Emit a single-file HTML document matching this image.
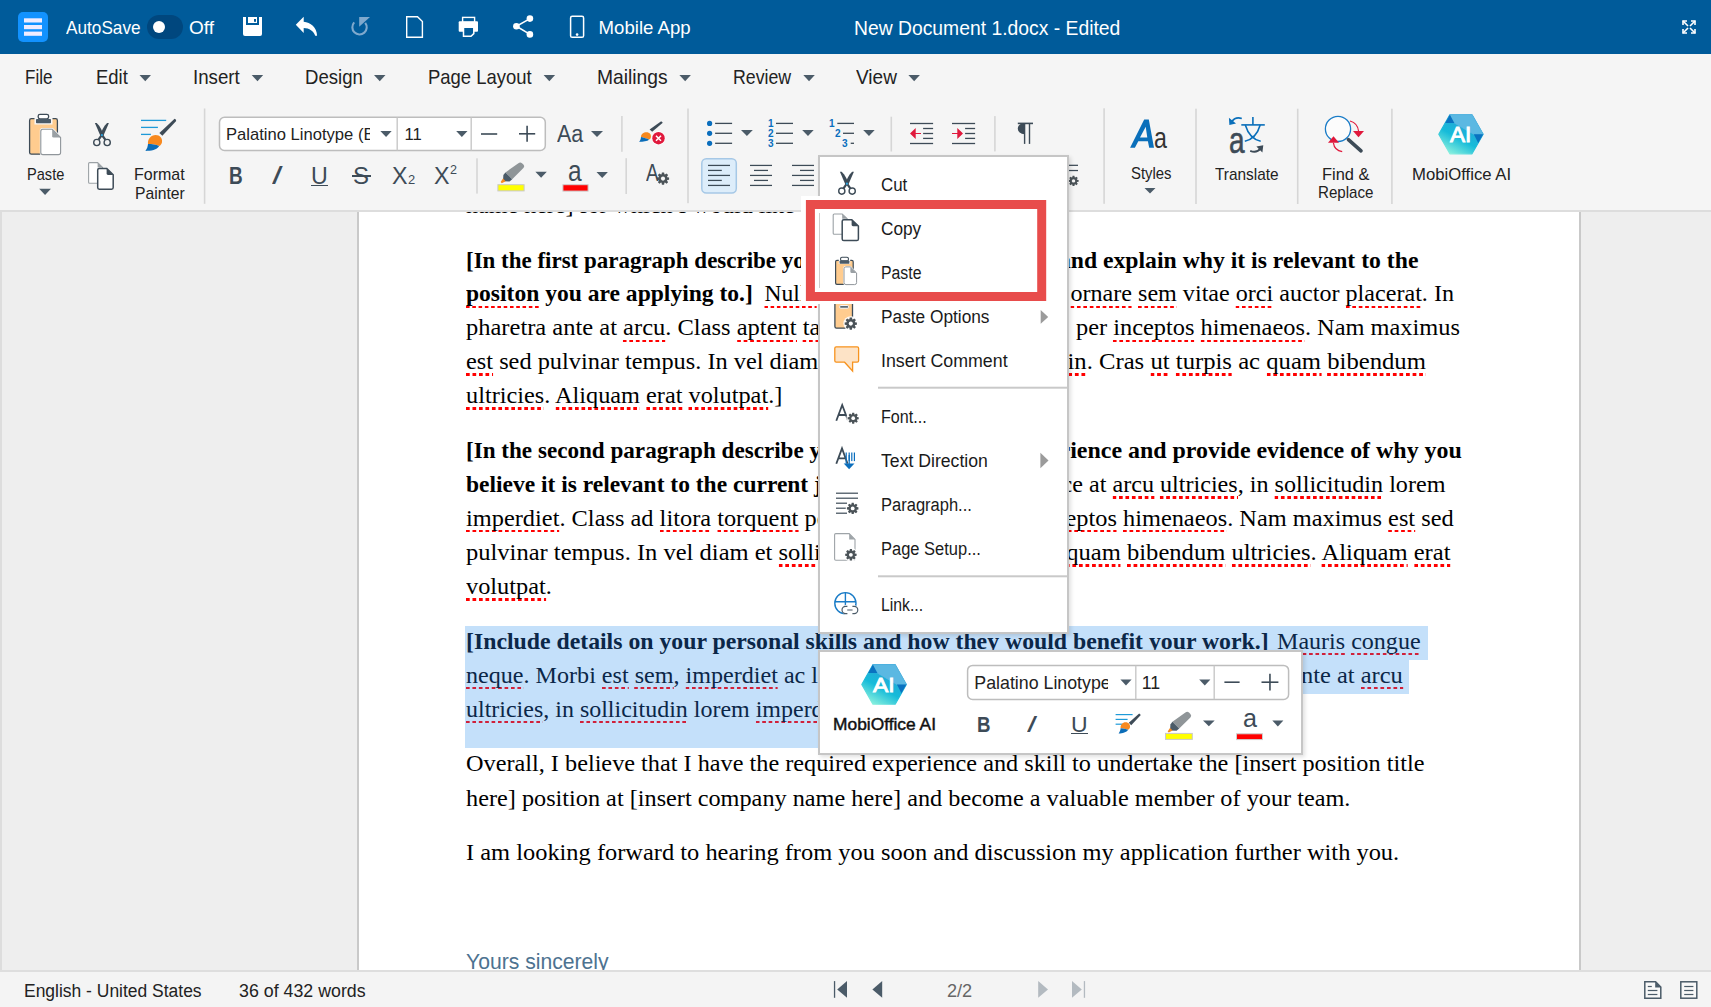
<!DOCTYPE html>
<html><head><meta charset="utf-8"><title>New Document 1.docx - Edited</title>
<style>
html,body{margin:0;padding:0;width:1711px;height:1007px;overflow:hidden;background:#eeeeee}
body{position:relative;font-family:"Liberation Sans",sans-serif}
.t{position:absolute;white-space:pre}
.sp{background-image:linear-gradient(to right,#ff0000 0,#ff0000 62%,transparent 62%);background-size:6px 2.6px;background-repeat:repeat-x;background-position:0 100%;padding-bottom:1.8px}
.sp2{background-image:linear-gradient(to right,#d0213a 0,#d0213a 62%,transparent 62%)}
b{font-weight:700}
</style></head><body>
<div style="position:absolute;left:0px;top:0px;width:1711px;height:1007px;background:#eeeeee"></div>
<div style="position:absolute;left:0px;top:0px;width:1711px;height:54px;background:#005b9a"></div>
<div style="position:absolute;left:0px;top:54px;width:1711px;height:156px;background:#f5f5f5"></div>
<div style="position:absolute;left:357px;top:210px;width:1224px;height:760px;background:#ffffff;border-left:2px solid #c9c9c9;border-right:2px solid #c9c9c9;box-sizing:border-box"></div>
<div style="position:absolute;left:465px;top:625.9px;width:962.6px;height:33.7px;background:#c4e0fa"></div>
<div style="position:absolute;left:465px;top:659.6px;width:943.9px;height:34px;background:#c4e0fa"></div>
<div style="position:absolute;left:465px;top:693.6px;width:836px;height:54.2px;background:#c4e0fa"></div>
<div style="position:absolute;left:0;top:210px;width:1711px;height:760px;overflow:hidden"><div style="position:absolute;left:0;top:-210px;width:1711px;height:1007px">
<div class="t" style="left:466.00px;top:190.90px;font-family:'Liberation Serif', serif;font-size:22.5px;font-weight:400;line-height:30px;color:#000000;transform:scaleX(1.0696);transform-origin:0 0;">name here] for which I would like</div>
<div class="t" style="left:466.00px;top:245.50px;font-family:'Liberation Serif', serif;font-size:22.5px;font-weight:400;line-height:30px;color:#000000;transform:scaleX(1.0206);transform-origin:0 0;"><b>[In the first paragraph describe</b><span style="position:absolute;left:100%;top:0"><b> your current</b></span></div>
<div class="t" style="left:1103.00px;top:245.50px;font-family:'Liberation Serif', serif;font-size:22.5px;font-weight:400;line-height:30px;color:#000000;transform:scaleX(1.0528);transform-origin:0 0;"><span style="position:absolute;right:100%;top:0"><b>and </b></span><b>explain why it is relevant to the</b></div>
<div class="t" style="left:466.00px;top:279.40px;font-family:'Liberation Serif', serif;font-size:22.5px;font-weight:400;line-height:30px;color:#000000;transform:scaleX(1.0467);transform-origin:0 0;"><b><span class="sp">positon</span> you are applying to.]</b><span style="position:absolute;left:100%;top:0">  <span class="sp">Nulla</span></span></div>
<div class="t" style="left:1138.00px;top:279.40px;font-family:'Liberation Serif', serif;font-size:22.5px;font-weight:400;line-height:30px;color:#000000;transform:scaleX(1.0716);transform-origin:0 0;"><span style="position:absolute;right:100%;top:0"><span class="sp">ornare</span> </span><span class="sp">sem</span> vitae <span class="sp">orci</span> auctor <span class="sp">placerat</span>. In</div>
<div class="t" style="left:466.00px;top:313.30px;font-family:'Liberation Serif', serif;font-size:22.5px;font-weight:400;line-height:30px;color:#000000;transform:scaleX(1.0888);transform-origin:0 0;">pharetra ante at <span class="sp">arcu</span>. Class <span class="sp">aptent</span><span style="position:absolute;left:100%;top:0"> <span class="sp">taciti</span></span></div>
<div class="t" style="left:1076.00px;top:313.30px;font-family:'Liberation Serif', serif;font-size:22.5px;font-weight:400;line-height:30px;color:#000000;transform:scaleX(1.0838);transform-origin:0 0;"><span style="position:absolute;right:100%;top:0">nostra, </span>per <span class="sp">inceptos</span> <span class="sp">himenaeos</span>. Nam maximus</div>
<div class="t" style="left:466.00px;top:347.00px;font-family:'Liberation Serif', serif;font-size:22.5px;font-weight:400;line-height:30px;color:#000000;transform:scaleX(1.0820);transform-origin:0 0;"><span class="sp">est</span> sed pulvinar tempus. In vel<span style="position:absolute;left:100%;top:0"> diam et</span></div>
<div class="t" style="left:1098.80px;top:347.00px;font-family:'Liberation Serif', serif;font-size:22.5px;font-weight:400;line-height:30px;color:#000000;transform:scaleX(1.0965);transform-origin:0 0;"><span style="position:absolute;right:100%;top:0"><span class="sp">sollicitudin</span>. </span>Cras <span class="sp">ut</span> <span class="sp">turpis</span> ac <span class="sp">quam</span> <span class="sp">bibendum</span></div>
<div class="t" style="left:466.00px;top:381.00px;font-family:'Liberation Serif', serif;font-size:22.5px;font-weight:400;line-height:30px;color:#000000;transform:scaleX(1.0792);transform-origin:0 0;"><span class="sp">ultricies</span>. <span class="sp">Aliquam</span> <span class="sp">erat</span> <span class="sp">volutpat</span>.]</div>
<div class="t" style="left:466.00px;top:436.10px;font-family:'Liberation Serif', serif;font-size:22.5px;font-weight:400;line-height:30px;color:#000000;transform:scaleX(1.0272);transform-origin:0 0;"><b>[In the second paragraph describe</b><span style="position:absolute;left:100%;top:0"><b> your</b></span></div>
<div class="t" style="left:1127.50px;top:436.10px;font-family:'Liberation Serif', serif;font-size:22.5px;font-weight:400;line-height:30px;color:#000000;transform:scaleX(1.0631);transform-origin:0 0;"><span style="position:absolute;right:100%;top:0"><b>experience </b></span><b>and provide evidence of why you</b></div>
<div class="t" style="left:466.00px;top:469.90px;font-family:'Liberation Serif', serif;font-size:22.5px;font-weight:400;line-height:30px;color:#000000;transform:scaleX(1.0438);transform-origin:0 0;"><b>believe it is relevant to the current</b><span style="position:absolute;left:100%;top:0"><b> job</b></span></div>
<div class="t" style="left:1089.00px;top:469.90px;font-family:'Liberation Serif', serif;font-size:22.5px;font-weight:400;line-height:30px;color:#000000;transform:scaleX(1.0720);transform-origin:0 0;"><span style="position:absolute;right:100%;top:0">Fusce </span>at <span class="sp">arcu</span> <span class="sp">ultricies</span>, in <span class="sp">sollicitudin</span> lorem</div>
<div class="t" style="left:466.00px;top:503.50px;font-family:'Liberation Serif', serif;font-size:22.5px;font-weight:400;line-height:30px;color:#000000;transform:scaleX(1.0833);transform-origin:0 0;"><span class="sp">imperdiet</span>. Class ad <span class="sp">litora</span> <span class="sp">torquent</span><span style="position:absolute;left:100%;top:0"> per</span></div>
<div class="t" style="left:1123.30px;top:503.50px;font-family:'Liberation Serif', serif;font-size:22.5px;font-weight:400;line-height:30px;color:#000000;transform:scaleX(1.0822);transform-origin:0 0;"><span style="position:absolute;right:100%;top:0"><span class="sp">inceptos</span> </span><span class="sp">himenaeos</span>. Nam maximus <span class="sp">est</span> sed</div>
<div class="t" style="left:466.00px;top:537.80px;font-family:'Liberation Serif', serif;font-size:22.5px;font-weight:400;line-height:30px;color:#000000;transform:scaleX(1.0897);transform-origin:0 0;">pulvinar tempus. In vel diam et<span style="position:absolute;left:100%;top:0"> <span class="sp">sollicitudin</span></span></div>
<div class="t" style="left:1126.80px;top:537.80px;font-family:'Liberation Serif', serif;font-size:22.5px;font-weight:400;line-height:30px;color:#000000;transform:scaleX(1.0921);transform-origin:0 0;"><span style="position:absolute;right:100%;top:0"><span class="sp">quam</span> </span><span class="sp">bibendum</span> <span class="sp">ultricies</span>. <span class="sp">Aliquam</span> <span class="sp">erat</span></div>
<div class="t" style="left:466.00px;top:572.00px;font-family:'Liberation Serif', serif;font-size:22.5px;font-weight:400;line-height:30px;color:#000000;transform:scaleX(1.0822);transform-origin:0 0;"><span class="sp">volutpat</span>.</div>
<div class="t" style="left:466.00px;top:626.60px;font-family:'Liberation Serif', serif;font-size:22.5px;font-weight:400;line-height:30px;color:#0b2748;transform:scaleX(1.0562);transform-origin:0 0;"><b>[Include details on your personal skills and how they would benefit your work.]</b></div>
<div class="t" style="left:1277.20px;top:626.60px;font-family:'Liberation Serif', serif;font-size:22.5px;font-weight:400;line-height:30px;color:#0b2748;transform:scaleX(1.0688);transform-origin:0 0;"><span class="sp sp2">Mauris</span> <span class="sp sp2">congue</span></div>
<div class="t" style="left:466.00px;top:660.70px;font-family:'Liberation Serif', serif;font-size:22.5px;font-weight:400;line-height:30px;color:#0b2748;transform:scaleX(1.0709);transform-origin:0 0;"><span class="sp sp2">neque</span>. Morbi <span class="sp sp2">est</span> <span class="sp sp2">sem</span>, <span class="sp sp2">imperdiet</span> ac<span style="position:absolute;left:100%;top:0"> lacus</span></div>
<div class="t" style="left:1337.40px;top:660.70px;font-family:'Liberation Serif', serif;font-size:22.5px;font-weight:400;line-height:30px;color:#0b2748;transform:scaleX(1.0859);transform-origin:0 0;"><span style="position:absolute;right:100%;top:0">ante </span>at <span class="sp sp2">arcu</span></div>
<div class="t" style="left:466.00px;top:694.60px;font-family:'Liberation Serif', serif;font-size:22.5px;font-weight:400;line-height:30px;color:#0b2748;transform:scaleX(1.0656);transform-origin:0 0;"><span class="sp sp2">ultricies</span>, in <span class="sp sp2">sollicitudin</span> lorem<span style="position:absolute;left:100%;top:0"> <span class="sp sp2">imperdiet</span></span></div>
<div class="t" style="left:466.00px;top:749.30px;font-family:'Liberation Serif', serif;font-size:22.5px;font-weight:400;line-height:30px;color:#000000;transform:scaleX(1.0780);transform-origin:0 0;">Overall, I believe that I have the required experience and skill to undertake the [insert position title</div>
<div class="t" style="left:466.00px;top:783.90px;font-family:'Liberation Serif', serif;font-size:22.5px;font-weight:400;line-height:30px;color:#000000;transform:scaleX(1.0781);transform-origin:0 0;">here] position at [insert company name here] and become a valuable member of your team.</div>
<div class="t" style="left:466.00px;top:838.10px;font-family:'Liberation Serif', serif;font-size:22.5px;font-weight:400;line-height:30px;color:#000000;transform:scaleX(1.0853);transform-origin:0 0;">I am looking forward to hearing from you soon and discussion my application further with you.</div>
<div class="t" style="left:466.00px;top:946.80px;font-family:'Liberation Sans', sans-serif;font-size:22.4px;font-weight:400;line-height:29px;color:#4d7290;transform:scaleX(0.9443);transform-origin:0 0;">Yours sincerely</div>
</div></div>
<div style="position:absolute;left:0px;top:210px;width:1711px;height:2px;background:#dddddd"></div>
<div style="position:absolute;left:0px;top:212px;width:2px;height:758px;background:#dddddd"></div>
<svg style="position:absolute;left:0px;top:0px;" width="1711" height="54" viewBox="0 0 1711 54"><rect x="18" y="12" width="30" height="30" rx="5" fill="#1292ff"/><rect x="24" y="18.3" width="18" height="4.2" fill="#f1ecff"/><rect x="24" y="25.0" width="18" height="4.2" fill="#f1ecff"/><rect x="24" y="31.6" width="18" height="4.2" fill="#f1ecff"/><rect x="147" y="15" width="36" height="24" rx="12" fill="#00477e"/><circle cx="159" cy="27" r="6" fill="#fff"/><path d="M243 17 H262 V34 Q262 36 260 36 H245 Q243 36 243 34 Z" fill="#fff"/><rect x="246" y="17" width="13" height="8" fill="#005b9a"/><rect x="248" y="17" width="9" height="6" fill="#fff"/><rect x="254" y="19" width="2" height="2.8" fill="#005b9a"/><path d="M295.8 24.7 L303.7 16.8 V21.8 C310.5 22.2 316.8 27.5 317.1 35.8 H315.2 C313.5 31.3 309.5 28.1 303.7 28.1 V32.9 Z" fill="#fff"/><path d="M354.2 22.4 A7.2 7.2 0 1 0 365.2 22.8" fill="none" stroke="#7fa9cd" stroke-width="2.1"/><path d="M359.2 17.1 H370 L359.2 26.8 Z" fill="#7fa9cd"/><path d="M406.7 16.7 H417.5 L422.4 21.6 V37.3 H406.7 Z" fill="none" stroke="#fff" stroke-width="1.4"/><rect x="462.6" y="17.4" width="12" height="5" fill="none" stroke="#fff" stroke-width="1.4"/><rect x="458.7" y="21.3" width="19.3" height="10.5" rx="1" fill="#fff"/><path d="M463.5 27.2 H473.8 V33.6 L471 36.3 H463.5 Z" fill="#005b9a" stroke="#fff" stroke-width="1.5"/><path d="M530 18.6 L516.4 26.2 L530 34.4" fill="none" stroke="#fff" stroke-width="1.6"/><circle cx="529.9" cy="18.6" r="3.3" fill="#fff"/><circle cx="516.4" cy="26.2" r="3.3" fill="#fff"/><circle cx="529.9" cy="34.4" r="3.3" fill="#fff"/><rect x="570.6" y="16.3" width="13" height="21" rx="1.6" fill="none" stroke="#fff" stroke-width="1.5"/><circle cx="577.1" cy="34.6" r="1.3" fill="#fff"/><g fill="none" stroke="#fff" stroke-width="1.6"><path d="M1683 25 V21 H1687"/><path d="M1683 21 L1688 26"/><path d="M1691 21 H1695 V25"/><path d="M1695 21 L1690 26"/><path d="M1683 29 V33 H1687"/><path d="M1683 33 L1688 28"/><path d="M1691 33 H1695 V29"/><path d="M1695 33 L1690 28"/></g></svg>
<div class="t" style="left:66.10px;top:15.80px;font-family:'Liberation Sans', sans-serif;font-size:18.6px;font-weight:400;line-height:24px;color:#ffffff;transform:scaleX(0.9251);transform-origin:0 0;">AutoSave</div>
<div class="t" style="left:189.00px;top:15.80px;font-family:'Liberation Sans', sans-serif;font-size:18.6px;font-weight:400;line-height:24px;color:#ffffff;transform:scaleX(1.0217);transform-origin:0 0;">Off</div>
<div class="t" style="left:598.60px;top:15.70px;font-family:'Liberation Sans', sans-serif;font-size:18.6px;font-weight:400;line-height:24px;color:#ffffff;">Mobile App</div>
<div class="t" style="left:854.20px;top:15.00px;font-family:'Liberation Sans', sans-serif;font-size:20px;font-weight:400;line-height:26px;color:#ffffff;transform:scaleX(0.9659);transform-origin:0 0;">New Document 1.docx - Edited</div>
<div class="t" style="left:25.40px;top:64.00px;font-family:'Liberation Sans', sans-serif;font-size:20.2px;font-weight:400;line-height:26px;color:#222;transform:scaleX(0.8423);transform-origin:0 0;">File</div>
<div class="t" style="left:95.90px;top:64.00px;font-family:'Liberation Sans', sans-serif;font-size:20.2px;font-weight:400;line-height:26px;color:#222;transform:scaleX(0.9139);transform-origin:0 0;">Edit</div>
<div class="t" style="left:193.10px;top:64.00px;font-family:'Liberation Sans', sans-serif;font-size:20.2px;font-weight:400;line-height:26px;color:#222;transform:scaleX(0.9267);transform-origin:0 0;">Insert</div>
<div class="t" style="left:305.00px;top:64.00px;font-family:'Liberation Sans', sans-serif;font-size:20.2px;font-weight:400;line-height:26px;color:#222;transform:scaleX(0.9197);transform-origin:0 0;">Design</div>
<div class="t" style="left:428.20px;top:64.00px;font-family:'Liberation Sans', sans-serif;font-size:20.2px;font-weight:400;line-height:26px;color:#222;transform:scaleX(0.9138);transform-origin:0 0;">Page Layout</div>
<div class="t" style="left:597.30px;top:64.00px;font-family:'Liberation Sans', sans-serif;font-size:20.2px;font-weight:400;line-height:26px;color:#222;transform:scaleX(0.9546);transform-origin:0 0;">Mailings</div>
<div class="t" style="left:733.20px;top:64.00px;font-family:'Liberation Sans', sans-serif;font-size:20.2px;font-weight:400;line-height:26px;color:#222;transform:scaleX(0.8791);transform-origin:0 0;">Review</div>
<div class="t" style="left:856.30px;top:64.00px;font-family:'Liberation Sans', sans-serif;font-size:20.2px;font-weight:400;line-height:26px;color:#222;transform:scaleX(0.9423);transform-origin:0 0;">View</div>
<svg style="position:absolute;left:0px;top:54px;" width="1711" height="50" viewBox="0 54 1711 50"><path d="M139.5 75 H151.0 L145.25 81.2 Z" fill="#4b5b68"/><path d="M251.7 75 H263.2 L257.45 81.2 Z" fill="#4b5b68"/><path d="M374 75 H385.5 L379.75 81.2 Z" fill="#4b5b68"/><path d="M543.6 75 H555.1 L549.35 81.2 Z" fill="#4b5b68"/><path d="M679.4 75 H690.9 L685.15 81.2 Z" fill="#4b5b68"/><path d="M803.3 75 H814.8 L809.05 81.2 Z" fill="#4b5b68"/><path d="M908.4 75 H919.9 L914.15 81.2 Z" fill="#4b5b68"/></svg>
<svg style="position:absolute;left:0px;top:104px;" width="1711" height="106" viewBox="0 104 1711 106"><rect x="29.6" y="118.6" width="27.8" height="35.6" rx="1.8" fill="#ffcc8f" stroke="#3d4b57" stroke-width="1.3"/><rect x="34.5" y="117.3" width="18" height="7.2" fill="#f5f5f5"/><rect x="38.2" y="114.3" width="10.4" height="4.6" rx="1.8" fill="#fff" stroke="#3d4b57" stroke-width="1.3"/><rect x="36" y="119" width="15" height="4.2" rx="0.8" fill="#4b5b68"/><path d="M39.8 128 H53 L61.6 136.8 V153 Q61.6 155.6 59 155.6 H42.4 Q39.8 155.6 39.8 153 V130.6 Q39.8 128 42.4 128 Z" fill="#f5f5f5"/><path d="M42.6 129.2 H52.2 L60.6 137.6 V152.4 Q60.6 154.6 58.4 154.6 H43 Q40.8 154.6 40.8 152.4 V131.4 Q40.8 129.2 42.6 129.2 Z" fill="#fff" stroke="#90969b" stroke-width="1.1"/><path d="M52.2 129.2 L60.6 137.6 H53.6 Q52.2 137.6 52.2 136.2 Z" fill="#9aa0a4"/><path d="M39.2 188.8 H50.900000000000006 L45.050000000000004 195.0 Z" fill="#4b5b68"/><g transform="translate(101.9 135.1)"><path d="M-7 -12 L-1.4 1 L1.3 -0.2 C0.8 -3.5 -1.6 -8.6 -5.2 -12 Z" fill="#3d4b57"/><path d="M7 -12 L1.4 1 L-1.3 -0.2 C-0.8 -3.5 1.6 -8.6 5.2 -12 Z" fill="#3d4b57"/><path d="M-0.4 0.4 L-3.4 4.6 M0.4 0.4 L3.4 4.6" stroke="#3d4b57" stroke-width="2.2"/><circle cx="-5.1" cy="7.4" r="3.1" fill="none" stroke="#3d4b57" stroke-width="1.4"/><circle cx="5.3" cy="7.4" r="3.1" fill="none" stroke="#3d4b57" stroke-width="1.4"/><circle cx="0" cy="0" r="1.1" fill="#29a3e0"/></g><path d="M89.6 162.6 H97.6 L102.6 167.4 V183.2 H89.6 Q88.6 183.2 88.6 182.2 V163.6 Q88.6 162.6 89.6 162.6 Z" fill="#fff" stroke="#9ca2a6" stroke-width="1.1"/><path d="M97.6 162.6 L102.6 167.4 H97.6 Z" fill="#9ca2a6"/><path d="M99.3 168.5 H106.8 L113.2 174.7 V187.6 Q113.2 189.2 111.6 189.2 H99.3 Q97.7 189.2 97.7 187.6 V170.1 Q97.7 168.5 99.3 168.5 Z" fill="#fff" stroke="#3d4b57" stroke-width="1.5"/><path d="M106.6 168.5 L113.2 174.9 H108 Q106.6 174.9 106.6 173.5 Z" fill="#3d4b57"/><g stroke="#1e9ad8" stroke-width="1.3"><path d="M141 120.4 H166.2"/><path d="M141 127.4 H157.9"/><path d="M141 134.4 H150.9"/></g><path d="M174.6 118.8 Q176.2 119.4 176.2 121 L162.4 135.8 L159.4 133 Z" fill="#3d4b57"/><path d="M148 144 C147.4 139 151 135 155.6 135 C160 135 162.6 138.4 162 142.2 C161.6 144 160.6 145.4 159.2 146 C156 144.6 152 144 148 144 Z" fill="#f7891f"/><path d="M148 144 C152 144 156 144.6 159.2 146 C157 150 151 150.9 145.4 150.9 C147 149 147.8 146.5 148 144 Z" fill="#0b6db8"/><rect x="203.79999999999998" y="108.5" width="1.6" height="95.30000000000001" fill="#d6d6d6"/><rect x="219.5" y="117.2" width="325.8" height="33.2" rx="5" fill="#fff" stroke="#bdbdbd" stroke-width="1.5"/><rect x="396.5" y="117.5" width="1.4" height="33.0" fill="#c8c8c8"/><rect x="470.5" y="117.5" width="1.4" height="33.0" fill="#c8c8c8"/><path d="M380.4 131 H391.7 L386.04999999999995 137 Z" fill="#4b5b68"/><path d="M456.2 131 H467.5 L461.84999999999997 137 Z" fill="#4b5b68"/><g stroke="#3d4b57" stroke-width="1.6"><path d="M481 134 H497.2"/><path d="M519 133.8 H535.2"/><path d="M527.1 125.8 V141.8"/></g><path d="M591 131 H603 L597.0 137 Z" fill="#4b5b68"/><rect x="621.1" y="116" width="1.6" height="35.80000000000001" fill="#d6d6d6"/><path d="M661.2 121.2 L662.8 122.8 L652.2 131.8 L649.6 129.4 Z" fill="#3d4b57"/><path d="M641 137 C641 134 643.5 132.3 646.5 132.3 C649.5 132.3 651.3 134.5 650.9 137 C650.7 138.3 650 139.2 649 139.6 C647 138.4 644 137.8 641 137 Z" fill="#f7891f"/><path d="M641 137 C644 137.8 647 138.4 649 139.6 C647.5 141.5 643 141.9 639.2 141.9 C640.3 140.6 640.8 139 641 137 Z" fill="#0b6db8"/><circle cx="658.5" cy="138.2" r="6.9" fill="#fff"/><circle cx="658.5" cy="138.2" r="6.2" fill="#e0193c"/><path d="M656 135.7 L661 140.7 M661 135.7 L656 140.7" stroke="#fff" stroke-width="1.5"/><rect x="476.2" y="158.3" width="1.6" height="35.29999999999998" fill="#d6d6d6"/><rect x="625.4000000000001" y="158.2" width="1.6" height="35.80000000000001" fill="#d6d6d6"/><path d="M518.4 163.2 Q520.2 161.6 522 163.2 L523.4 164.6 Q525 166.4 523.4 168 L512.2 179.2 L505.4 172.4 Z" fill="#8f9598"/><path d="M505.4 172.4 L512.2 179.2 L509.6 181.4 L503 181.2 L503.4 175 Z" fill="#4b5b68"/><path d="M503 178.6 L505.6 181.2 L501.8 183.2 L500.6 182 Z" fill="#f7891f"/><rect x="497.9" y="184.7" width="26.2" height="6.2" fill="#ffff00" stroke="#c9c9c9" stroke-width="1"/><path d="M535.4 171.8 H546.8 L541.1 177.8 Z" fill="#4b5b68"/><rect x="562.9" y="184.7" width="25.2" height="6.4" fill="#ff0000" stroke="#cfcfcf" stroke-width="1"/><path d="M596.5 172 H607.9 L602.2 178 Z" fill="#4b5b68"/><circle cx="663" cy="178.6" r="7.4" fill="#f5f5f5" opacity="0.9"/><polygon points="667.23,177.16 669.10,177.50 669.10,179.70 667.23,180.04 667.01,180.57 668.09,182.13 666.53,183.69 664.97,182.61 664.44,182.83 664.10,184.70 661.90,184.70 661.56,182.83 661.03,182.61 659.47,183.69 657.91,182.13 658.99,180.57 658.77,180.04 656.90,179.70 656.90,177.50 658.77,177.16 658.99,176.63 657.91,175.07 659.47,173.51 661.03,174.59 661.56,174.37 661.90,172.50 664.10,172.50 664.44,174.37 664.97,174.59 666.53,173.51 668.09,175.07 667.01,176.63" fill="#4b5358"/><circle cx="663" cy="178.6" r="2.05" fill="#f5f5f5"/><rect x="687.2" y="108.5" width="1.6" height="94.69999999999999" fill="#d6d6d6"/><circle cx="709.6" cy="123.4" r="2.6" fill="#0a6ebd"/><rect x="715.1" y="122.75" width="17" height="1.3" fill="#3d4b57"/><circle cx="709.6" cy="133.3" r="2.6" fill="#0a6ebd"/><rect x="715.1" y="132.65" width="17" height="1.3" fill="#3d4b57"/><circle cx="709.6" cy="143.3" r="2.6" fill="#0a6ebd"/><rect x="715.1" y="142.65" width="17" height="1.3" fill="#3d4b57"/><path d="M741 130 H752.8 L746.9 136 Z" fill="#4b5b68"/><rect x="776" y="122.75" width="17" height="1.3" fill="#3d4b57"/><rect x="776" y="132.65" width="17" height="1.3" fill="#3d4b57"/><rect x="776" y="142.65" width="17" height="1.3" fill="#3d4b57"/><path d="M802.2 130 H813.7 L807.95 136 Z" fill="#4b5b68"/><rect x="837.3" y="122.75" width="16.7" height="1.3" fill="#3d4b57"/><rect x="843" y="132.65" width="11" height="1.3" fill="#3d4b57"/><rect x="850.7" y="142.65" width="3.3" height="1.3" fill="#3d4b57"/><path d="M863.2 130 H874.7 L868.95 136 Z" fill="#4b5b68"/><rect x="890.5" y="116.7" width="1.6" height="34.8" fill="#d6d6d6"/><g fill="#3d4b57"><rect x="910" y="122.85" width="23.1" height="1.3"/><rect x="923.1" y="127.85" width="10" height="1.3"/><rect x="923.1" y="132.85" width="10" height="1.3"/><rect x="923.1" y="137.75" width="10" height="1.3"/><rect x="910" y="142.85" width="23.1" height="1.3"/></g><g fill="#3d4b57"><rect x="952" y="122.85" width="23.1" height="1.3"/><rect x="965.1" y="127.85" width="10" height="1.3"/><rect x="965.1" y="132.85" width="10" height="1.3"/><rect x="965.1" y="137.75" width="10" height="1.3"/><rect x="952" y="142.85" width="23.1" height="1.3"/></g><path d="M910 133.5 L915.7 128 V132.9 H921 V134.1 H915.7 V139 Z" fill="#e0193c"/><path d="M963 133.5 L957.3 128 V132.9 H952 V134.1 H957.3 V139 Z" fill="#e0193c"/><rect x="994.1" y="116.1" width="1.6" height="35.30000000000001" fill="#d6d6d6"/><path d="M1024.6 123 V134.2 C1020.4 134.2 1017.8 131.6 1017.8 128.6 C1017.8 125.6 1020.4 123 1024.6 123 Z" fill="#3d4b57"/><rect x="1017.8" y="122.6" width="15.2" height="1.6" fill="#3d4b57"/><rect x="1023.9" y="123" width="1.4" height="20.9" fill="#3d4b57"/><rect x="1028.8" y="123" width="1.4" height="20.9" fill="#3d4b57"/><rect x="701.8" y="158.7" width="34.5" height="34.3" rx="4.5" fill="#ddedfa" stroke="#a6c8e6" stroke-width="1.5"/><rect x="708" y="164.8" width="22" height="1.25" fill="#3d4b57"/><rect x="708" y="169.8" width="13.799999999999955" height="1.25" fill="#3d4b57"/><rect x="708" y="174.8" width="22" height="1.25" fill="#3d4b57"/><rect x="708" y="179.8" width="13.799999999999955" height="1.25" fill="#3d4b57"/><rect x="708" y="184.8" width="22" height="1.25" fill="#3d4b57"/><rect x="750" y="164.8" width="22" height="1.25" fill="#3d4b57"/><rect x="754" y="169.8" width="14" height="1.25" fill="#3d4b57"/><rect x="750" y="174.8" width="22" height="1.25" fill="#3d4b57"/><rect x="754" y="179.8" width="14" height="1.25" fill="#3d4b57"/><rect x="750" y="184.8" width="22" height="1.25" fill="#3d4b57"/><rect x="792" y="164.8" width="22" height="1.25" fill="#3d4b57"/><rect x="800" y="169.8" width="14" height="1.25" fill="#3d4b57"/><rect x="792" y="174.8" width="22" height="1.25" fill="#3d4b57"/><rect x="800" y="179.8" width="14" height="1.25" fill="#3d4b57"/><rect x="792" y="184.8" width="22" height="1.25" fill="#3d4b57"/><rect x="1068" y="164.7" width="10" height="1.25" fill="#3d4b57"/><rect x="1068" y="169.9" width="10" height="1.25" fill="#3d4b57"/><circle cx="1073.5" cy="180.9" r="6.4" fill="#f5f5f5" opacity="0.9"/><polygon points="1077.04,179.69 1078.62,179.97 1078.62,181.83 1077.04,182.11 1076.86,182.55 1077.77,183.86 1076.46,185.17 1075.15,184.26 1074.71,184.44 1074.43,186.02 1072.57,186.02 1072.29,184.44 1071.85,184.26 1070.54,185.17 1069.23,183.86 1070.14,182.55 1069.96,182.11 1068.38,181.83 1068.38,179.97 1069.96,179.69 1070.14,179.25 1069.23,177.94 1070.54,176.63 1071.85,177.54 1072.29,177.36 1072.57,175.78 1074.43,175.78 1074.71,177.36 1075.15,177.54 1076.46,176.63 1077.77,177.94 1076.86,179.25" fill="#4b5358"/><circle cx="1073.5" cy="180.9" r="1.72" fill="#f5f5f5"/><rect x="1103.3" y="108.3" width="1.6" height="95.50000000000001" fill="#d6d6d6"/><path d="M1130.1 147.8 L1144.2 119.4 H1148.8 L1154 147.8 H1149.2 L1147.9 141.2 H1138.3 L1134.9 147.8 Z M1140 137.4 H1147.3 L1145.7 126.7 Z" fill="#0a6fba" fill-rule="evenodd"/><path d="M1144.5 188 H1155.5 L1150.0 193.6 Z" fill="#4b5b68"/><rect x="1195.2" y="108.7" width="1.6" height="95.3" fill="#d6d6d6"/><g fill="none" stroke="#0a6fba" stroke-width="1.6"><path d="M1241.3 124.9 H1264.8"/><path d="M1252.9 117.1 V124.9"/><path d="M1245.3 125 C1248 134 1253 139.5 1260.7 141.3"/><path d="M1260.2 125 C1257.6 134 1252.5 139.5 1244.8 141.3"/><path d="M1241.8 118.4 C1238 117.2 1234 118.4 1231.8 121.6"/></g><path d="M1228.9 117.8 L1229.4 124.9 L1236 123.6 Z" fill="#0a6fba"/><path d="M1250.2 150.8 C1254 152.4 1258 151.8 1260.6 148.4" fill="none" stroke="#3d4b57" stroke-width="1.8"/><path d="M1256.4 146.6 L1263.3 145.3 L1262.4 152.6 Z" fill="#3d4b57"/><rect x="1296.9" y="108.7" width="1.6" height="95.3" fill="#d6d6d6"/><circle cx="1338" cy="128.9" r="12.6" fill="#fcfcfc" stroke="#1a7cc7" stroke-width="1.3"/><path d="M1348.4 139.6 L1361 150.8" stroke="#3d4b57" stroke-width="3.6" stroke-linecap="round"/><path d="M1350 121 C1354.5 122.2 1358 126 1358.6 131.2" fill="none" stroke="#e0193c" stroke-width="1.2"/><path d="M1353 131 H1364 L1358.5 137.3 Z" fill="#e0193c"/><path d="M1333.4 142.8 C1334 147.4 1337.6 150.8 1342.2 151.7" fill="none" stroke="#e0193c" stroke-width="1.2"/><path d="M1328 142.8 H1339 L1333.5 136.3 Z" fill="#e0193c"/><rect x="1391.1000000000001" y="108.7" width="1.6" height="95.3" fill="#d6d6d6"/><defs><linearGradient id="gr" x1="0.2" y1="1" x2="0.75" y2="0.1"><stop offset="0" stop-color="#8ef3de"/><stop offset="0.45" stop-color="#16bbd9"/><stop offset="1" stop-color="#2c9fd6"/></linearGradient></defs><polygon points="1449.875,114.8 1472.0249999999999,114.8 1483.1,134.3 1472.0249999999999,153.8 1449.875,153.8 1438.8,134.3" fill="url(#gr)" stroke="url(#gr)" stroke-width="1.2" stroke-linejoin="round"/><polygon points="1449.875,114.8 1472.0249999999999,114.8 1483.1,134.3 1473.797,134.3 1454.305,122.99" fill="#5bb8e2" stroke="#5bb8e2" stroke-width="0.8" stroke-linejoin="round"/><polygon points="1449.875,114.8 1454.305,122.99 1445.2235,122.99" fill="#0a72c0"/><polygon points="1483.1,134.3 1473.797,134.3 1478.2269999999999,142.88" fill="#0a72c0"/></svg>
<div class="t" style="left:26.70px;top:163.80px;font-family:'Liberation Sans', sans-serif;font-size:17px;font-weight:400;line-height:22px;color:#222;transform:scaleX(0.8578);transform-origin:0 0;">Paste</div>
<div class="t" style="left:134.10px;top:163.60px;font-family:'Liberation Sans', sans-serif;font-size:17px;font-weight:400;line-height:22px;color:#222;transform:scaleX(0.9416);transform-origin:0 0;">Format</div>
<div class="t" style="left:134.50px;top:182.90px;font-family:'Liberation Sans', sans-serif;font-size:17px;font-weight:400;line-height:22px;color:#222;transform:scaleX(0.9225);transform-origin:0 0;">Painter</div>
<div class="t" style="left:1130.50px;top:162.70px;font-family:'Liberation Sans', sans-serif;font-size:17px;font-weight:400;line-height:22px;color:#222;transform:scaleX(0.8748);transform-origin:0 0;">Styles</div>
<div class="t" style="left:1215.40px;top:163.90px;font-family:'Liberation Sans', sans-serif;font-size:17px;font-weight:400;line-height:22px;color:#222;transform:scaleX(0.9055);transform-origin:0 0;">Translate</div>
<div class="t" style="left:1322.20px;top:163.90px;font-family:'Liberation Sans', sans-serif;font-size:17px;font-weight:400;line-height:22px;color:#222;transform:scaleX(0.9666);transform-origin:0 0;">Find &amp;</div>
<div class="t" style="left:1317.50px;top:182.10px;font-family:'Liberation Sans', sans-serif;font-size:17px;font-weight:400;line-height:22px;color:#222;transform:scaleX(0.8898);transform-origin:0 0;">Replace</div>
<div class="t" style="left:1411.80px;top:163.90px;font-family:'Liberation Sans', sans-serif;font-size:17px;font-weight:400;line-height:22px;color:#222;transform:scaleX(0.9832);transform-origin:0 0;">MobiOffice AI</div>
<div class="t" style="left:1449.80px;top:119.90px;font-family:'Liberation Sans', sans-serif;font-size:22px;font-weight:400;line-height:29px;color:#fff;transform:scaleX(1.0290);transform-origin:0 0;-webkit-text-stroke:0.9px #fff;">AI</div>
<div style="position:absolute;left:222px;top:118px;width:148px;height:32px;overflow:hidden">
<div class="t" style="left:4.00px;top:6.00px;font-family:'Liberation Sans', sans-serif;font-size:16.6px;font-weight:400;line-height:22px;color:#222;">Palatino Linotype (Book)</div>
</div>
<div class="t" style="left:404.50px;top:124.00px;font-family:'Liberation Sans', sans-serif;font-size:16.6px;font-weight:400;line-height:22px;color:#222;">11</div>
<div class="t" style="left:557.00px;top:118.50px;font-family:'Liberation Sans', sans-serif;font-size:23.5px;font-weight:400;line-height:31px;color:#3d4b57;transform:scaleX(0.9113);transform-origin:0 0;">Aa</div>
<div class="t" style="left:567.80px;top:152.20px;font-family:'Liberation Sans', sans-serif;font-size:29px;font-weight:400;line-height:38px;color:#3d4b57;transform:scaleX(0.8426);transform-origin:0 0;">a</div>
<div class="t" style="left:645.80px;top:158.00px;font-family:'Liberation Sans', sans-serif;font-size:23.5px;font-weight:400;line-height:31px;color:#3d4b57;transform:scaleX(0.8032);transform-origin:0 0;">A</div>
<div class="t" style="left:1154.20px;top:118.80px;font-family:'Liberation Sans', sans-serif;font-size:29px;font-weight:400;line-height:38px;color:#333333;transform:scaleX(0.7992);transform-origin:0 0;">a</div>
<div class="t" style="left:1228.90px;top:116.70px;font-family:'Liberation Sans', sans-serif;font-size:37px;font-weight:400;line-height:48px;color:#3d4b57;transform:scaleX(0.7581);transform-origin:0 0;-webkit-text-stroke:0.6px #3d4b57;">a</div>
<div class="t" style="left:228.50px;top:161.00px;font-family:'Liberation Sans', sans-serif;font-size:23px;font-weight:700;line-height:30px;color:#3d4b57;transform:scaleX(0.8241);transform-origin:0 0;">B</div>
<div class="t" style="left:272.30px;top:161.00px;font-family:'Liberation Sans', sans-serif;font-size:23px;font-weight:400;line-height:30px;color:#3d4b57;transform:scaleX(1.6743);transform-origin:0 0;">/</div>
<div class="t" style="left:311.00px;top:161.00px;font-family:'Liberation Sans', sans-serif;font-size:23px;font-weight:400;line-height:30px;color:#3d4b57;transform:scaleX(1.0105);transform-origin:0 0;">U</div>
<div style="position:absolute;left:311px;top:184.6px;width:16.8px;height:1.5px;background:#3d4b57"></div>
<div class="t" style="left:352.90px;top:161.00px;font-family:'Liberation Sans', sans-serif;font-size:23px;font-weight:400;line-height:30px;color:#3d4b57;transform:scaleX(1.0428);transform-origin:0 0;">S</div>
<div style="position:absolute;left:351.5px;top:175.4px;width:19.3px;height:1.4px;background:#3d4b57"></div>
<div class="t" style="left:392.00px;top:161.00px;font-family:'Liberation Sans', sans-serif;font-size:23px;font-weight:400;line-height:30px;color:#3d4b57;transform:scaleX(1.0102);transform-origin:0 0;">X</div>
<div class="t" style="left:408.30px;top:172.00px;font-family:'Liberation Sans', sans-serif;font-size:12px;font-weight:400;line-height:16px;color:#3d4b57;transform:scaleX(1.0766);transform-origin:0 0;">2</div>
<div class="t" style="left:434.20px;top:161.00px;font-family:'Liberation Sans', sans-serif;font-size:23px;font-weight:400;line-height:30px;color:#3d4b57;transform:scaleX(1.0102);transform-origin:0 0;">X</div>
<div class="t" style="left:450.00px;top:162.00px;font-family:'Liberation Sans', sans-serif;font-size:12px;font-weight:400;line-height:16px;color:#3d4b57;transform:scaleX(1.0467);transform-origin:0 0;">2</div>
<div class="t" style="left:767.90px;top:116.20px;font-family:'Liberation Sans', sans-serif;font-size:10.6px;font-weight:700;line-height:14px;color:#0a6ebd;transform:scaleX(0.9481);transform-origin:0 0;">1</div>
<div class="t" style="left:767.60px;top:126.20px;font-family:'Liberation Sans', sans-serif;font-size:10.6px;font-weight:700;line-height:14px;color:#0a6ebd;transform:scaleX(0.9481);transform-origin:0 0;">2</div>
<div class="t" style="left:767.60px;top:136.10px;font-family:'Liberation Sans', sans-serif;font-size:10.6px;font-weight:700;line-height:14px;color:#0a6ebd;transform:scaleX(0.9481);transform-origin:0 0;">3</div>
<div class="t" style="left:829.30px;top:116.20px;font-family:'Liberation Sans', sans-serif;font-size:10.6px;font-weight:700;line-height:14px;color:#0a6ebd;transform:scaleX(0.9481);transform-origin:0 0;">1</div>
<div class="t" style="left:835.20px;top:126.20px;font-family:'Liberation Sans', sans-serif;font-size:10.6px;font-weight:700;line-height:14px;color:#0a6ebd;transform:scaleX(0.9481);transform-origin:0 0;">2</div>
<div class="t" style="left:841.80px;top:136.10px;font-family:'Liberation Sans', sans-serif;font-size:10.6px;font-weight:700;line-height:14px;color:#0a6ebd;transform:scaleX(0.9481);transform-origin:0 0;">3</div>
<div style="position:absolute;left:0px;top:970px;width:1711px;height:37px;background:#f4f4f4"></div>
<div style="position:absolute;left:0px;top:970px;width:1711px;height:2px;background:#dedede"></div>
<div class="t" style="left:24.40px;top:979.60px;font-family:'Liberation Sans', sans-serif;font-size:17.6px;font-weight:400;line-height:23px;color:#222;transform:scaleX(0.9924);transform-origin:0 0;">English - United States</div>
<div class="t" style="left:239.40px;top:979.60px;font-family:'Liberation Sans', sans-serif;font-size:17.6px;font-weight:400;line-height:23px;color:#222;transform:scaleX(1.0112);transform-origin:0 0;">36 of 432 words</div>
<div class="t" style="left:947.30px;top:979.50px;font-family:'Liberation Sans', sans-serif;font-size:17.6px;font-weight:400;line-height:23px;color:#666666;transform:scaleX(1.0299);transform-origin:0 0;">2/2</div>
<svg style="position:absolute;left:0px;top:970px;" width="1711" height="37" viewBox="0 970 1711 37"><rect x="833.9" y="981.1" width="1.3" height="16.7" fill="#4b5b68"/><path d="M847 981.1 V997.8 L837.2 989.45 Z" fill="#4b5b68"/><path d="M882.2 981.1 V997.8 L872.4 989.45 Z" fill="#4b5b68"/><path d="M1038.2 981.1 V997.8 L1048 989.45 Z" fill="#b3bac0"/><path d="M1072 981.1 V997.8 L1081.8 989.45 Z" fill="#b3bac0"/><rect x="1083.8" y="981.1" width="1.3" height="16.7" fill="#b3bac0"/><path d="M1644.8 981.8 H1655.6 L1660.8 987 V998.2 H1644.8 Z" fill="#f8f8f8" stroke="#4b5b68" stroke-width="1.5"/><path d="M1655.2 981.4 L1661.2 987.4 H1655.2 Z" fill="#4b5b68"/><g fill="#4b5b68"><rect x="1647.8" y="985.9" width="4" height="1.2"/><rect x="1647.8" y="989.9" width="9.6" height="1.2"/><rect x="1647.8" y="993.9" width="9.6" height="1.2"/></g><rect x="1680.8" y="981.8" width="16" height="16.4" fill="#f8f8f8" stroke="#4b5b68" stroke-width="1.5"/><g fill="#4b5b68"><rect x="1684.2" y="985.9" width="9.2" height="1.2"/><rect x="1684.2" y="989.9" width="9.2" height="1.2"/><rect x="1684.2" y="993.9" width="9.2" height="1.2"/></g></svg>
<div style="position:absolute;left:818px;top:155px;width:251px;height:479px;background:#fff;border:2px solid #c6c6c6;box-sizing:border-box;box-shadow:2px 2px 4px rgba(0,0,0,0.12)"></div>
<div class="t" style="left:880.70px;top:173.00px;font-family:'Liberation Sans', sans-serif;font-size:18.8px;font-weight:400;line-height:24px;color:#1a1a1a;transform:scaleX(0.8996);transform-origin:0 0;">Cut</div>
<div class="t" style="left:880.70px;top:304.60px;font-family:'Liberation Sans', sans-serif;font-size:18.8px;font-weight:400;line-height:24px;color:#1a1a1a;transform:scaleX(0.9196);transform-origin:0 0;">Paste Options</div>
<div class="t" style="left:880.70px;top:348.60px;font-family:'Liberation Sans', sans-serif;font-size:18.8px;font-weight:400;line-height:24px;color:#1a1a1a;transform:scaleX(0.9475);transform-origin:0 0;">Insert Comment</div>
<div class="t" style="left:880.70px;top:404.60px;font-family:'Liberation Sans', sans-serif;font-size:18.8px;font-weight:400;line-height:24px;color:#1a1a1a;transform:scaleX(0.8582);transform-origin:0 0;">Font...</div>
<div class="t" style="left:880.70px;top:448.50px;font-family:'Liberation Sans', sans-serif;font-size:18.8px;font-weight:400;line-height:24px;color:#1a1a1a;transform:scaleX(0.9395);transform-origin:0 0;">Text Direction</div>
<div class="t" style="left:880.70px;top:492.50px;font-family:'Liberation Sans', sans-serif;font-size:18.8px;font-weight:400;line-height:24px;color:#1a1a1a;transform:scaleX(0.8793);transform-origin:0 0;">Paragraph...</div>
<div class="t" style="left:880.70px;top:537.10px;font-family:'Liberation Sans', sans-serif;font-size:18.8px;font-weight:400;line-height:24px;color:#1a1a1a;transform:scaleX(0.8776);transform-origin:0 0;">Page Setup...</div>
<div class="t" style="left:880.70px;top:593.20px;font-family:'Liberation Sans', sans-serif;font-size:18.8px;font-weight:400;line-height:24px;color:#1a1a1a;transform:scaleX(0.8402);transform-origin:0 0;">Link...</div>
<svg style="position:absolute;left:818px;top:155px;" width="251" height="479" viewBox="818 155 251 479"><rect x="878" y="386.7" width="189" height="2" fill="#c9c9c9"/><rect x="878" y="575.3" width="189" height="2" fill="#c9c9c9"/><path d="M1040.7 310 L1048.2 316.9 L1040.7 323.8 Z" fill="#9b9b9b"/><path d="M1040.4 452.8 L1048.5 460.5 L1040.4 468.2 Z" fill="#9b9b9b"/><g transform="translate(846.9 183.7)"><path d="M-7 -12 L-1.4 1 L1.3 -0.2 C0.8 -3.5 -1.6 -8.6 -5.2 -12 Z" fill="#3d4b57"/><path d="M7 -12 L1.4 1 L-1.3 -0.2 C-0.8 -3.5 1.6 -8.6 5.2 -12 Z" fill="#3d4b57"/><path d="M-0.4 0.4 L-3.4 4.6 M0.4 0.4 L3.4 4.6" stroke="#3d4b57" stroke-width="2.2"/><circle cx="-5.1" cy="7.4" r="3.1" fill="none" stroke="#3d4b57" stroke-width="1.4"/><circle cx="5.3" cy="7.4" r="3.1" fill="none" stroke="#3d4b57" stroke-width="1.4"/><circle cx="0" cy="0" r="1.1" fill="#29a3e0"/></g><rect x="834.9" y="301" width="17.6" height="27.2" rx="1.6" fill="#ffcc8f" stroke="#3d4b57" stroke-width="1.3"/><rect x="839.8" y="305.6" width="8.6" height="2.6" rx="0.6" fill="#4b5b68" stroke="#fff" stroke-width="1"/><circle cx="850.8" cy="323.6" r="7.4" fill="#ffffff" opacity="0.9"/><polygon points="855.03,322.16 856.90,322.50 856.90,324.70 855.03,325.04 854.81,325.57 855.89,327.13 854.33,328.69 852.77,327.61 852.24,327.83 851.90,329.70 849.70,329.70 849.36,327.83 848.83,327.61 847.27,328.69 845.71,327.13 846.79,325.57 846.57,325.04 844.70,324.70 844.70,322.50 846.57,322.16 846.79,321.63 845.71,320.07 847.27,318.51 848.83,319.59 849.36,319.37 849.70,317.50 851.90,317.50 852.24,319.37 852.77,319.59 854.33,318.51 855.89,320.07 854.81,321.63" fill="#4b5358"/><circle cx="850.8" cy="323.6" r="2.05" fill="#ffffff"/><path d="M836.2 346.8 H857.2 Q858.6 346.8 858.6 348.2 V360.8 Q858.6 362.2 857.2 362.2 H852.6 V371 L844.6 362.2 H836.2 Q834.8 362.2 834.8 360.8 V348.2 Q834.8 346.8 836.2 346.8 Z" fill="#fde3c6" stroke="#f7931e" stroke-width="1.3"/><path d="M836.3 420.8 L842.2 405 L848.1 420.8 M838.5 415 H846" fill="none" stroke="#3d4b57" stroke-width="1.8"/><circle cx="853.2" cy="418.2" r="6.8" fill="#ffffff" opacity="0.9"/><polygon points="857.02,416.90 858.71,417.20 858.71,419.20 857.02,419.50 856.82,419.98 857.80,421.39 856.39,422.80 854.98,421.82 854.50,422.02 854.20,423.71 852.20,423.71 851.90,422.02 851.42,421.82 850.01,422.80 848.60,421.39 849.58,419.98 849.38,419.50 847.69,419.20 847.69,417.20 849.38,416.90 849.58,416.42 848.60,415.01 850.01,413.60 851.42,414.58 851.90,414.38 852.20,412.69 854.20,412.69 854.50,414.38 854.98,414.58 856.39,413.60 857.80,415.01 856.82,416.42" fill="#4b5358"/><circle cx="853.2" cy="418.2" r="1.85" fill="#ffffff"/><path d="M836.3 463.8 L842 448.4 L847.6 463.8 M838.4 458.4 H845.6" fill="none" stroke="#3d4b57" stroke-width="1.8"/><g fill="#0a6ebd"><rect x="848.6" y="452.5" width="1.2" height="8.6"/><rect x="851.2" y="452.5" width="1.2" height="8.6"/><rect x="853.8" y="452.5" width="1.2" height="8.6"/><rect x="848.6" y="455" width="1.2" height="9.4"/><path d="M843.7 463.6 H854.5 L849.1 469.2 Z"/></g><rect x="845.6" y="452.5" width="1.2" height="11.2" fill="#0a6ebd"/><g fill="#3d4b57"><rect x="836" y="492.6" width="22" height="1.2"/><rect x="836" y="497.6" width="22" height="1.2"/><rect x="836" y="502.6" width="11" height="1.2"/><rect x="836" y="507.6" width="11" height="1.2"/><rect x="836" y="512.6" width="11" height="1.2"/></g><circle cx="852.7" cy="508.4" r="7.0" fill="#ffffff" opacity="0.9"/><polygon points="856.65,507.05 858.41,507.37 858.41,509.43 856.65,509.75 856.45,510.24 857.47,511.71 856.01,513.17 854.54,512.15 854.05,512.35 853.73,514.11 851.67,514.11 851.35,512.35 850.86,512.15 849.39,513.17 847.93,511.71 848.95,510.24 848.75,509.75 846.99,509.43 846.99,507.37 848.75,507.05 848.95,506.56 847.93,505.09 849.39,503.63 850.86,504.65 851.35,504.45 851.67,502.69 853.73,502.69 854.05,504.45 854.54,504.65 856.01,503.63 857.47,505.09 856.45,506.56" fill="#4b5358"/><circle cx="852.7" cy="508.4" r="1.91" fill="#ffffff"/><path d="M835.8 533.6 H849.2 L855 539.4 V559 Q855 560.2 853.8 560.2 H835.8 Q834.6 560.2 834.6 559 V534.8 Q834.6 533.6 835.8 533.6 Z" fill="#fff" stroke="#9ea4a8" stroke-width="1.1"/><path d="M849.2 533.6 L855 539.4 H849.2 Z" fill="#9ea4a8"/><circle cx="850.9" cy="554.8" r="7.0" fill="#ffffff" opacity="0.9"/><polygon points="854.85,553.45 856.61,553.77 856.61,555.83 854.85,556.15 854.65,556.64 855.67,558.11 854.21,559.57 852.74,558.55 852.25,558.75 851.93,560.51 849.87,560.51 849.55,558.75 849.06,558.55 847.59,559.57 846.13,558.11 847.15,556.64 846.95,556.15 845.19,555.83 845.19,553.77 846.95,553.45 847.15,552.96 846.13,551.49 847.59,550.03 849.06,551.05 849.55,550.85 849.87,549.09 851.93,549.09 852.25,550.85 852.74,551.05 854.21,550.03 855.67,551.49 854.65,552.96" fill="#4b5358"/><circle cx="850.9" cy="554.8" r="1.91" fill="#ffffff"/><circle cx="845.4" cy="603.2" r="10.6" fill="none" stroke="#1a7cc7" stroke-width="1.4"/><path d="M834.8 601.8 H856 M845.4 592.6 V607" fill="none" stroke="#1a7cc7" stroke-width="1.4"/><rect x="843" y="605.4" width="14" height="9" rx="4.5" fill="#fff" stroke="#fff" stroke-width="2"/><path d="M847.4 606.4 H845.6 A3.6 3.6 0 0 0 845.6 613.6 H847.4 M852.4 606.4 H854.2 A3.6 3.6 0 0 1 854.2 613.6 H852.4 M847.2 610 H852.6" fill="none" stroke="#4b5b68" stroke-width="1.2"/></svg>
<div style="position:absolute;left:801px;top:196px;width:264px;height:108px;background:#ffffff"></div>
<svg style="position:absolute;left:800px;top:195px;" width="270" height="110" viewBox="800 195 270 110"><rect x="819" y="213" width="0.9" height="75" fill="#c8c8c8"/><path d="M834.2 214 H842.2 L847.2 218.8 V234.2 H834.2 Q833.2 234.2 833.2 233.2 V215 Q833.2 214 834.2 214 Z" fill="#fff" stroke="#9ca2a6" stroke-width="1.1"/><path d="M842.2 214 L847.2 218.8 H842.2 Z" fill="#9ca2a6"/><path d="M843.8 219.7 H851.8 L858.4 226 V239 Q858.4 240.6 856.8 240.6 H843.8 Q842.2 240.6 842.2 239 V221.3 Q842.2 219.7 843.8 219.7 Z" fill="#fff" stroke="#3d4b57" stroke-width="1.5"/><path d="M851.6 219.7 L858.4 226.2 H853 Q851.6 226.2 851.6 224.8 Z" fill="#3d4b57"/><rect x="835.6" y="260.4" width="17.6" height="24" rx="1.4" fill="#ffcc8f" stroke="#3d4b57" stroke-width="1.2"/><rect x="838.8" y="259" width="11.4" height="5" fill="#fff"/><rect x="840.6" y="257.2" width="7.8" height="3.6" rx="1.4" fill="#fff" stroke="#3d4b57" stroke-width="1.1"/><rect x="839.6" y="260.6" width="9.8" height="3.2" rx="0.6" fill="#4b5b68"/><path d="M843.2 266 H850.6 L857.4 272.6 V283 Q857.4 285.4 855 285.4 H845.6 Q843.2 285.4 843.2 283 V268.4 Q843.2 266 845.6 266 Z" fill="#fff"/><path d="M845.8 266.9 H850.4 L856.6 273 V282.6 Q856.6 284.6 854.6 284.6 H846 Q844 284.6 844 282.6 V268.7 Q844 266.9 845.8 266.9 Z" fill="#fff" stroke="#90969b" stroke-width="1"/><path d="M850.4 266.9 L856.6 273 H851.6 Q850.4 273 850.4 271.8 Z" fill="#9aa0a4"/><path d="M810.4 204.5 H1041.7 V296.4 H810.4 Z" fill="none" stroke="#e84c4b" stroke-width="9"/></svg>
<div class="t" style="left:880.70px;top:217.10px;font-family:'Liberation Sans', sans-serif;font-size:18.8px;font-weight:400;line-height:24px;color:#1a1a1a;transform:scaleX(0.9166);transform-origin:0 0;">Copy</div>
<div class="t" style="left:880.70px;top:261.00px;font-family:'Liberation Sans', sans-serif;font-size:18.8px;font-weight:400;line-height:24px;color:#1a1a1a;transform:scaleX(0.8432);transform-origin:0 0;">Paste</div>
<div style="position:absolute;left:818px;top:650px;width:485px;height:105px;background:#fff;border:2px solid #c6c6c6;box-sizing:border-box;box-shadow:2px 2px 4px rgba(0,0,0,0.12)"></div>
<svg style="position:absolute;left:818px;top:650px;" width="485" height="105" viewBox="818 650 485 105"><defs><linearGradient id="gm" x1="0.2" y1="1" x2="0.75" y2="0.1"><stop offset="0" stop-color="#8ef3de"/><stop offset="0.45" stop-color="#16bbd9"/><stop offset="1" stop-color="#2c9fd6"/></linearGradient></defs><polygon points="872.925,664.7 895.175,664.7 906.3,684.45 895.175,704.2 872.925,704.2 861.8,684.45" fill="url(#gm)" stroke="url(#gm)" stroke-width="1.2" stroke-linejoin="round"/><polygon points="872.925,664.7 895.175,664.7 906.3,684.45 896.9549999999999,684.45 877.375,672.995" fill="#5bb8e2" stroke="#5bb8e2" stroke-width="0.8" stroke-linejoin="round"/><polygon points="872.925,664.7 877.375,672.995 868.2524999999999,672.995" fill="#0a72c0"/><polygon points="906.3,684.45 896.9549999999999,684.45 901.405,693.1400000000001" fill="#0a72c0"/><rect x="967.6" y="665.4" width="321" height="34" rx="5" fill="#fff" stroke="#bdbdbd" stroke-width="1.5"/><rect x="1135.1" y="665.6" width="1.4" height="33.60000000000002" fill="#c8c8c8"/><rect x="1213.5" y="665.6" width="1.4" height="33.60000000000002" fill="#c8c8c8"/><path d="M1120.4 679.6 H1131.6000000000001 L1126.0 685.6 Z" fill="#4b5b68"/><path d="M1199.2 679.6 H1210.4 L1204.8 685.6 Z" fill="#4b5b68"/><g stroke="#3d4b57" stroke-width="1.6"><path d="M1224.4 682.2 H1239.6"/><path d="M1261.5 682.2 H1278.4"/><path d="M1269.95 673.8 V690.6"/></g><g stroke="#1e9ad8" stroke-width="1.2"><path d="M1115.6 714.6 H1132.6"/><path d="M1115.6 719.4 H1127.6"/><path d="M1115.6 724.2 H1122.6"/></g><path d="M1139.2 713.4 L1140.8 715 L1131.2 725.2 L1128.8 722.8 Z" fill="#3d4b57"/><path d="M1120.6 728.2 C1120.2 725 1122.6 722.3 1125.6 722.3 C1128.6 722.3 1130.4 724.6 1130 727.2 C1129.8 728.4 1129.1 729.3 1128.1 729.7 C1126 728.8 1123.4 728.4 1120.6 728.2 Z" fill="#f7891f"/><path d="M1120.6 728.2 C1123.4 728.4 1126 728.8 1128.1 729.7 C1126.6 732.4 1122.6 733.4 1118.6 733.4 C1119.8 732 1120.4 730 1120.6 728.2 Z" fill="#0b6db8"/><path d="M1185.4 712.6 Q1187.2 711 1189 712.6 L1190.4 714 Q1192 715.8 1190.4 717.4 L1179.2 728.6 L1172.4 721.8 Z" fill="#8f9598"/><path d="M1172.4 721.8 L1179.2 728.6 L1176.6 730.8 L1170 730.6 L1170.4 724.4 Z" fill="#4b5b68"/><path d="M1170 728 L1172.6 730.6 L1168.8 732.6 L1167.6 731.4 Z" fill="#f7891f"/><rect x="1165.5" y="733.4" width="26.8" height="6" fill="#ffff00" stroke="#c9c9c9" stroke-width="1"/><path d="M1203 720.4 H1214.7 L1208.85 726.1999999999999 Z" fill="#4b5b68"/><rect x="1236.5" y="733.8" width="26" height="5.8" fill="#ff0000" stroke="#cfcfcf" stroke-width="1"/><path d="M1272.3 720.6 H1283.3999999999999 L1277.85 726.4 Z" fill="#4b5b68"/></svg>
<div class="t" style="left:873.40px;top:670.80px;font-family:'Liberation Sans', sans-serif;font-size:21px;font-weight:400;line-height:27px;color:#fff;transform:scaleX(1.0885);transform-origin:0 0;-webkit-text-stroke:0.9px #fff;">AI</div>
<div class="t" style="left:832.50px;top:712.70px;font-family:'Liberation Sans', sans-serif;font-size:17.2px;font-weight:400;line-height:22px;color:#111;transform:scaleX(1.0107);transform-origin:0 0;-webkit-text-stroke:0.45px #111;">MobiOffice AI</div>
<div style="position:absolute;left:970px;top:666px;width:138px;height:32px;overflow:hidden">
<div class="t" style="left:4.30px;top:5.80px;font-family:'Liberation Sans', sans-serif;font-size:17.8px;font-weight:400;line-height:23px;color:#222;">Palatino Linotype</div>
</div>
<div class="t" style="left:1141.70px;top:671.80px;font-family:'Liberation Sans', sans-serif;font-size:17.8px;font-weight:400;line-height:23px;color:#222;">11</div>
<div class="t" style="left:976.50px;top:709.90px;font-family:'Liberation Sans', sans-serif;font-size:22px;font-weight:700;line-height:29px;color:#3d4b57;transform:scaleX(0.8496);transform-origin:0 0;">B</div>
<div class="t" style="left:1026.60px;top:709.90px;font-family:'Liberation Sans', sans-serif;font-size:22px;font-weight:400;line-height:29px;color:#3d4b57;transform:scaleX(1.6653);transform-origin:0 0;">/</div>
<div class="t" style="left:1071.00px;top:709.90px;font-family:'Liberation Sans', sans-serif;font-size:22px;font-weight:400;line-height:29px;color:#3d4b57;transform:scaleX(1.0446);transform-origin:0 0;">U</div>
<div style="position:absolute;left:1071px;top:732.8px;width:16.6px;height:1.5px;background:#3d4b57"></div>
<div class="t" style="left:1242.50px;top:701.00px;font-family:'Liberation Sans', sans-serif;font-size:26.5px;font-weight:400;line-height:34px;color:#3d4b57;transform:scaleX(0.9492);transform-origin:0 0;">a</div>
</body></html>
